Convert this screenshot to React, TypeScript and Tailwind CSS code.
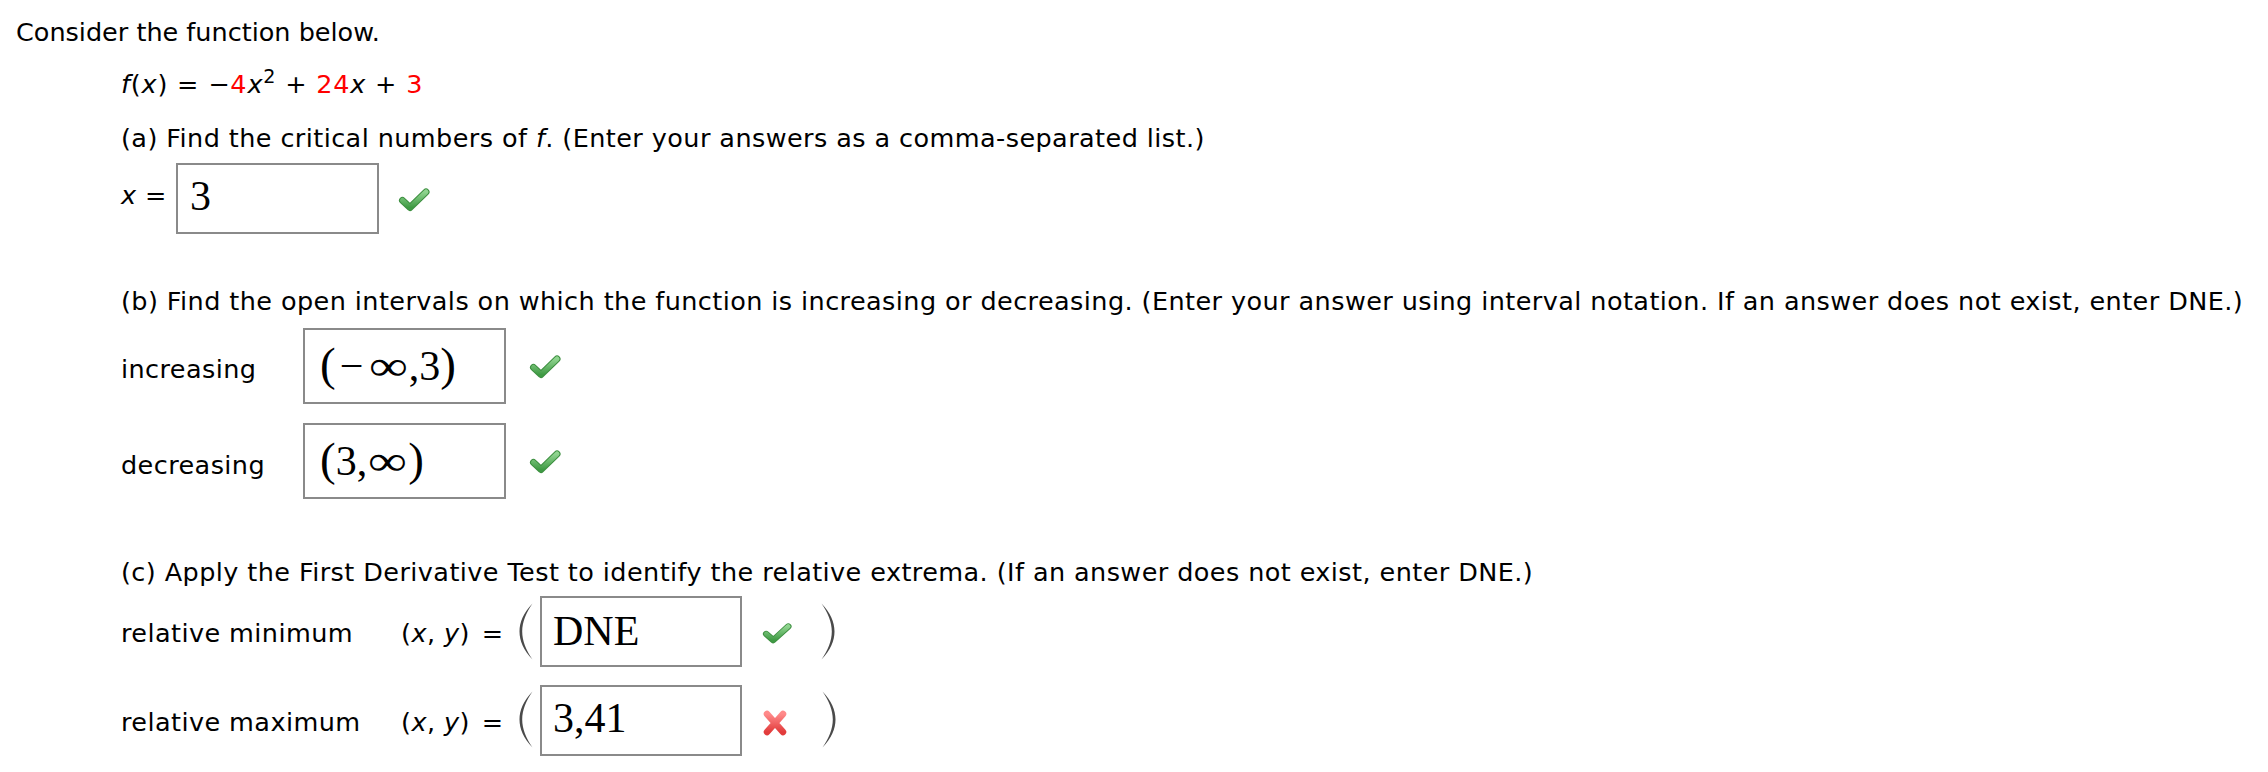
import React from 'react';

function Check({ small = false }: { small?: boolean }) {
  return (
    <svg
      width={small ? 30 : 32}
      height={small ? 23 : 26}
      viewBox="0 0 32 26"
      preserveAspectRatio="none"
    >
      <defs>
        <linearGradient id="chk" x1="0" y1="0" x2="0" y2="1">
          <stop offset="0" stopColor="#8fd48f" />
          <stop offset="1" stopColor="#3f9a44" />
        </linearGradient>
      </defs>
      <path
        d="M4.5 13.5 L12 20.5 L28 5"
        fill="none"
        stroke="#3d8f40"
        strokeWidth="7"
        strokeLinecap="round"
        strokeLinejoin="round"
      />
      <path
        d="M4.5 13.5 L12 20.5 L28 5"
        fill="none"
        stroke="url(#chk)"
        strokeWidth="5"
        strokeLinecap="round"
        strokeLinejoin="round"
      />
    </svg>
  );
}

function Cross() {
  return (
    <svg width="26" height="28" viewBox="0 0 26 28">
      <defs>
        <linearGradient id="crs" x1="0" y1="0" x2="0" y2="1">
          <stop offset="0" stopColor="#ff8a8a" />
          <stop offset="1" stopColor="#e23c3c" />
        </linearGradient>
      </defs>
      <path
        d="M5 5 L21 23 M21 5 L5 23"
        fill="none"
        stroke="url(#crs)"
        strokeWidth="6.5"
        strokeLinecap="round"
      />
    </svg>
  );
}

function BigParen({ right = false }: { right?: boolean }) {
  return (
    <svg width="17" height="57" viewBox="0 0 17 57" className={right ? '-scale-x-100' : ''}>
      <path
        d="M15.5 0.5 C6.5 10 2.5 19 2.5 28.5 C2.5 38 6.5 47 15.5 56.5 C9 47 5.2 38 5.2 28.5 C5.2 19 9 10 15.5 0.5 Z"
        fill="#4a4a4a"
      />
    </svg>
  );
}

function AnswerBox({
  className,
  children,
}: {
  className: string;
  children: React.ReactNode;
}) {
  return (
    <div
      className={`shrink-0 border-2 border-[#8a8a8a] bg-white font-['Liberation_Serif',serif] text-[42px] leading-[normal] tracking-normal text-black whitespace-nowrap ${className}`}
    >
      {children}
    </div>
  );
}

export default function App() {
  return (
    <div className="min-h-[772px] w-[2268px] bg-white pl-[16px] pt-[17px] font-['DejaVu_Sans',sans-serif] text-[25.5px] leading-[30px] text-black">
      <p className="whitespace-nowrap">Consider the function below.</p>

      <div className="pl-[105px] tracking-[0.42px]">
        {/* function */}
        <p className="mt-[22px] whitespace-nowrap tracking-[0.8px]">
          <i>f</i>(<i>x</i>) = −<span className="text-[#ff0000]">4</span>
          <i>x</i>
          <sup>2</sup> + <span className="text-[#ff0000]">24</span>
          <i>x</i> + <span className="text-[#ff0000]">3</span>
        </p>

        {/* part a */}
        <p className="mt-[24px] whitespace-nowrap">
          (a) Find the critical numbers of <i>f</i>. (Enter your answers as a comma-separated list.)
        </p>
        <div className="mt-[10px] flex items-start">
          <span className="mt-[17px] w-[55px] shrink-0 whitespace-nowrap">
            <i>x</i> =
          </span>
          <AnswerBox className="h-[71px] w-[203px] pl-[12px] pt-[7px]">3</AnswerBox>
          <span className="ml-[19px] mt-[24px]">
            <Check />
          </span>
        </div>

        {/* part b */}
        <p className="mt-[52px] whitespace-nowrap">
          (b) Find the open intervals on which the function is increasing or decreasing. (Enter your
          answer using interval notation. If an answer does not exist, enter DNE.)
        </p>
        <div className="mt-[12px] flex items-start">
          <span className="mt-[26px] w-[182px] shrink-0">increasing</span>
          <AnswerBox className="h-[76px] w-[203px] pl-[15px] pt-[11px]">
            <span className="text-[47px] leading-none">(</span>
            <span className="inline-block w-[32px] text-center">−</span>
            <span className="inline-block w-[41px] scale-x-[1.3] text-center">∞</span>,3
            <span className="text-[47px] leading-none">)</span>
          </AnswerBox>
          <span className="ml-[23px] mt-[26px]">
            <Check />
          </span>
        </div>
        <div className="mt-[19px] flex items-start">
          <span className="mt-[27px] w-[182px] shrink-0">decreasing</span>
          <AnswerBox className="h-[76px] w-[203px] pl-[15px] pt-[11px]">
            <span className="text-[47px] leading-none">(</span>3,
            <span className="inline-block w-[41px] scale-x-[1.3] text-center">∞</span>
            <span className="text-[47px] leading-none">)</span>
          </AnswerBox>
          <span className="ml-[23px] mt-[26px]">
            <Check />
          </span>
        </div>

        {/* part c */}
        <p className="mt-[58px] whitespace-nowrap">
          (c) Apply the First Derivative Test to identify the relative extrema. (If an answer does not
          exist, enter DNE.)
        </p>
        <div className="mt-[9px] flex items-start">
          <span className="mt-[22px] w-[280px] shrink-0 whitespace-nowrap">relative minimum</span>
          <span className="mt-[22px] w-[116px] shrink-0 whitespace-nowrap">
            (<i>x</i>, <i>y</i>)<span className="ml-[12px]">=</span>
          </span>
          <span className="mt-[7px]">
            <BigParen />
          </span>
          <AnswerBox className="ml-[6px] h-[71px] w-[202px] pl-[11px] pt-[9px]">DNE</AnswerBox>
          <span className="ml-[20px] mt-[26px]">
            <Check small />
          </span>
          <span className="ml-[28px] mt-[7px]">
            <BigParen right />
          </span>
        </div>
        <div className="mt-[18px] flex items-start">
          <span className="mt-[22px] w-[280px] shrink-0 whitespace-nowrap">relative maximum</span>
          <span className="mt-[22px] w-[116px] shrink-0 whitespace-nowrap">
            (<i>x</i>, <i>y</i>)<span className="ml-[12px]">=</span>
          </span>
          <span className="mt-[6px]">
            <BigParen />
          </span>
          <AnswerBox className="ml-[6px] h-[71px] w-[202px] pl-[11px] pt-[7px]">3,41</AnswerBox>
          <span className="ml-[20px] mt-[24px]">
            <Cross />
          </span>
          <span className="ml-[33px] mt-[6px]">
            <BigParen right />
          </span>
        </div>
      </div>
    </div>
  );
}
